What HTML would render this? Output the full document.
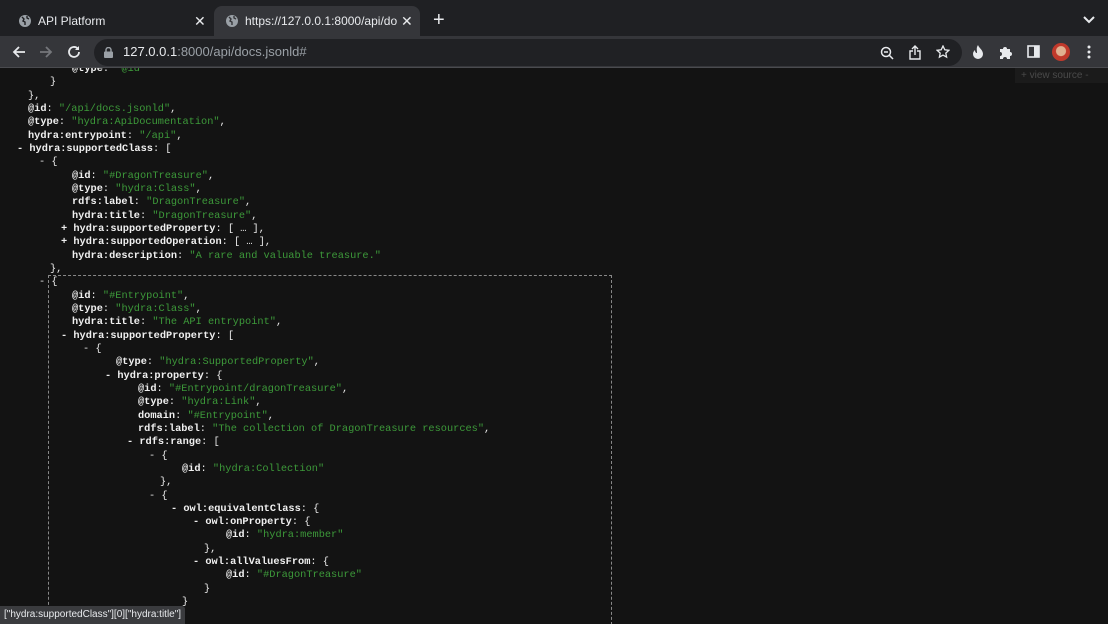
<!DOCTYPE html>
<html><head><meta charset="utf-8"><style>
*{margin:0;padding:0;box-sizing:border-box}
html,body{width:1108px;height:624px;overflow:hidden}
body{background:#131313;font-family:"Liberation Sans",sans-serif;position:relative}
.tabbar{position:absolute;left:0;top:0;width:1108px;height:36px;background:#1f2023;z-index:5}
.tab{position:absolute;top:6px;height:30px;font-size:12px;color:#e8eaed;line-height:30px}
.tab.active{background:#35363a;border-radius:8px 8px 0 0}
.toolbar{position:absolute;left:0;top:36px;width:1108px;height:32px;background:#35363a;border-bottom:1px solid #4a4b4f;z-index:5}
.omni{position:absolute;left:94px;top:3px;width:868px;height:27px;background:#202124;border-radius:14px}
.code{position:absolute;left:0;top:63px;width:700px;font-family:"Liberation Mono",monospace;font-size:10.3px;line-height:13.33px;color:#e8e8e8}
.code div{position:relative;height:13.33px;white-space:pre}
.k{font-weight:bold;color:#f0f0f0}
.s{color:#3d9a3a}
.box{position:absolute;left:48px;top:275px;width:564px;height:360px;border:1px dashed #888}
.status{position:absolute;left:0;top:606px;height:18px;background:#3a3b3e;color:#e8eaed;font-size:10px;line-height:18px;padding:0 4px;border-radius:0 3px 0 0;z-index:6}
.vs{position:absolute;left:1015px;top:68px;width:93px;height:15px;background:#1b1b1b;color:#4a4a4a;font-size:10px;line-height:15px;padding-left:6px}
</style></head><body>
<div class="tabbar">
 <div class="tab" style="left:18px;width:190px">
  <svg style="position:absolute;left:0;top:8px" width="14" height="14" viewBox="0 0 14 14"><circle cx="7" cy="7" r="6" fill="#9aa0a6"/><path d="M4 3l2 2-1 2 2 1v3M9 2l0 2 2 1" stroke="#1f2023" stroke-width="1.4" fill="none"/></svg>
  <span style="position:absolute;left:20px">API Platform</span>
  <span style="position:absolute;left:176px;font-size:14px">✕</span>
 </div>
 <div class="tab active" style="left:214px;width:206px">
  <svg style="position:absolute;left:11px;top:8px" width="14" height="14" viewBox="0 0 14 14"><circle cx="7" cy="7" r="6" fill="#9aa0a6"/><path d="M4 3l2 2-1 2 2 1v3M9 2l0 2 2 1" stroke="#35363a" stroke-width="1.4" fill="none"/></svg>
  <span style="position:absolute;left:31px;width:152px;overflow:hidden;white-space:nowrap">https://127.0.0.1:8000/api/docs</span>
  <span style="position:absolute;left:187px;font-size:14px">✕</span>
 </div>
 <span style="position:absolute;left:433px;top:5px;color:#e8eaed;font-size:20px;line-height:30px">+</span>
 <svg style="position:absolute;left:1083px;top:16px" width="12" height="8" viewBox="0 0 12 8"><path d="M1 1l5 5 5-5" stroke="#e8eaed" stroke-width="2" fill="none"/></svg>
</div>
<div class="toolbar">
 <svg style="position:absolute;left:11px;top:8px" width="16" height="16" viewBox="0 0 16 16"><path d="M14 8H3M8 3L3 8l5 5" stroke="#e8eaed" stroke-width="1.8" fill="none"/></svg>
 <svg style="position:absolute;left:38px;top:8px" width="16" height="16" viewBox="0 0 16 16"><path d="M2 8h11M8 3l5 5-5 5" stroke="#75777b" stroke-width="1.8" fill="none"/></svg>
 <svg style="position:absolute;left:66px;top:8px" width="16" height="16" viewBox="0 0 16 16"><path d="M13 8a5 5 0 1 1-1.5-3.6" stroke="#e8eaed" stroke-width="1.8" fill="none"/><path d="M13 2v4H9z" fill="#e8eaed"/></svg>
 <div class="omni">
  <svg style="position:absolute;left:10px;top:8px" width="9" height="11" viewBox="0 0 9 11"><rect x="0" y="4.5" width="9" height="6.5" rx="1" fill="#9aa0a6"/><path d="M2 5V3a2.5 2.5 0 0 1 5 0v2" stroke="#9aa0a6" stroke-width="1.4" fill="none"/></svg>
  <span style="position:absolute;left:29px;top:5px;font-size:13px;color:#e8eaed">127.0.0.1<span style="color:#9aa0a6">:8000/api/docs.jsonld#</span></span>
  <svg style="position:absolute;left:786px;top:7px" width="14" height="14" viewBox="0 0 14 14"><circle cx="6" cy="6" r="4.5" stroke="#e8eaed" stroke-width="1.5" fill="none"/><path d="M9.3 9.3L13 13M4 6h4" stroke="#e8eaed" stroke-width="1.5"/></svg>
  <svg style="position:absolute;left:815px;top:6px" width="12" height="15" viewBox="0 0 12 15"><path d="M6 10V1M3 4l3-3 3 3M4 6H1v8h10V6H8" stroke="#e8eaed" stroke-width="1.4" fill="none"/></svg>
  <svg style="position:absolute;left:842px;top:6px" width="14" height="14" viewBox="0 0 14 14"><path d="M7 1l1.8 3.8 4 .5-3 2.8.8 4L7 10.1 3.4 12.1l.8-4-3-2.8 4-.5z" stroke="#e8eaed" stroke-width="1.3" fill="none"/></svg>
 </div>
 <svg style="position:absolute;left:972px;top:9px" width="12" height="14" viewBox="0 0 12 14"><path d="M6 0c1 3 5 5 5 9a5 5 0 0 1-10 0c0-2 1-3 2-4 0 2 1 3 2 3 0-3-1-5 1-8z" fill="#e8eaed"/></svg>
 <svg style="position:absolute;left:998px;top:8px" width="16" height="16" viewBox="0 0 16 16"><path d="M2 5h3a2 2 0 1 1 4 0h3v3a2 2 0 1 1 0 4v3H9a2 2 0 1 0-4 0H2v-3a2 2 0 1 0 0-4z" fill="#e8eaed"/></svg>
 <svg style="position:absolute;left:1027px;top:9px" width="13" height="13" viewBox="0 0 13 13"><rect x="1" y="1" width="11" height="11" stroke="#e8eaed" stroke-width="1.6" fill="none"/><rect x="7" y="1" width="5" height="11" fill="#e8eaed"/></svg>
 <div style="position:absolute;left:1052px;top:7px;width:18px;height:18px;border-radius:50%;background:radial-gradient(circle at 50% 45%,#e0b090 0 35%,#c0392b 40%)"></div>
 <svg style="position:absolute;left:1087px;top:9px" width="4" height="14" viewBox="0 0 4 14"><circle cx="2" cy="2" r="1.5" fill="#e8eaed"/><circle cx="2" cy="7" r="1.5" fill="#e8eaed"/><circle cx="2" cy="12" r="1.5" fill="#e8eaed"/></svg>
</div>
<div class="code"><div style="left:72px"><span class="k">@type</span>: <span class="s">"@id"</span></div><div style="left:50px">}</div><div style="left:28px">},</div><div style="left:28px"><span class="k">@id</span>: <span class="s">"/api/docs.jsonld"</span>,</div><div style="left:28px"><span class="k">@type</span>: <span class="s">"hydra:ApiDocumentation"</span>,</div><div style="left:28px"><span class="k">hydra:entrypoint</span>: <span class="s">"/api"</span>,</div><div style="left:17px"><span class="k">- hydra:supportedClass</span>: [</div><div style="left:39px">- {</div><div style="left:72px"><span class="k">@id</span>: <span class="s">"#DragonTreasure"</span>,</div><div style="left:72px"><span class="k">@type</span>: <span class="s">"hydra:Class"</span>,</div><div style="left:72px"><span class="k">rdfs:label</span>: <span class="s">"DragonTreasure"</span>,</div><div style="left:72px"><span class="k">hydra:title</span>: <span class="s">"DragonTreasure"</span>,</div><div style="left:61px"><span class="k">+ hydra:supportedProperty</span>: [ … ],</div><div style="left:61px"><span class="k">+ hydra:supportedOperation</span>: [ … ],</div><div style="left:72px"><span class="k">hydra:description</span>: <span class="s">"A rare and valuable treasure."</span></div><div style="left:50px">},</div><div style="left:39px">- {</div><div style="left:72px"><span class="k">@id</span>: <span class="s">"#Entrypoint"</span>,</div><div style="left:72px"><span class="k">@type</span>: <span class="s">"hydra:Class"</span>,</div><div style="left:72px"><span class="k">hydra:title</span>: <span class="s">"The API entrypoint"</span>,</div><div style="left:61px"><span class="k">- hydra:supportedProperty</span>: [</div><div style="left:83px">- {</div><div style="left:116px"><span class="k">@type</span>: <span class="s">"hydra:SupportedProperty"</span>,</div><div style="left:105px"><span class="k">- hydra:property</span>: {</div><div style="left:138px"><span class="k">@id</span>: <span class="s">"#Entrypoint/dragonTreasure"</span>,</div><div style="left:138px"><span class="k">@type</span>: <span class="s">"hydra:Link"</span>,</div><div style="left:138px"><span class="k">domain</span>: <span class="s">"#Entrypoint"</span>,</div><div style="left:138px"><span class="k">rdfs:label</span>: <span class="s">"The collection of DragonTreasure resources"</span>,</div><div style="left:127px"><span class="k">- rdfs:range</span>: [</div><div style="left:149px">- {</div><div style="left:182px"><span class="k">@id</span>: <span class="s">"hydra:Collection"</span></div><div style="left:160px">},</div><div style="left:149px">- {</div><div style="left:171px"><span class="k">- owl:equivalentClass</span>: {</div><div style="left:193px"><span class="k">- owl:onProperty</span>: {</div><div style="left:226px"><span class="k">@id</span>: <span class="s">"hydra:member"</span></div><div style="left:204px">},</div><div style="left:193px"><span class="k">- owl:allValuesFrom</span>: {</div><div style="left:226px"><span class="k">@id</span>: <span class="s">"#DragonTreasure"</span></div><div style="left:204px">}</div><div style="left:182px">}</div></div>
<div class="box"></div>
<div class="vs">+ view source -</div>
<div class="status">["hydra:supportedClass"][0]["hydra:title"]</div>
</body></html>
